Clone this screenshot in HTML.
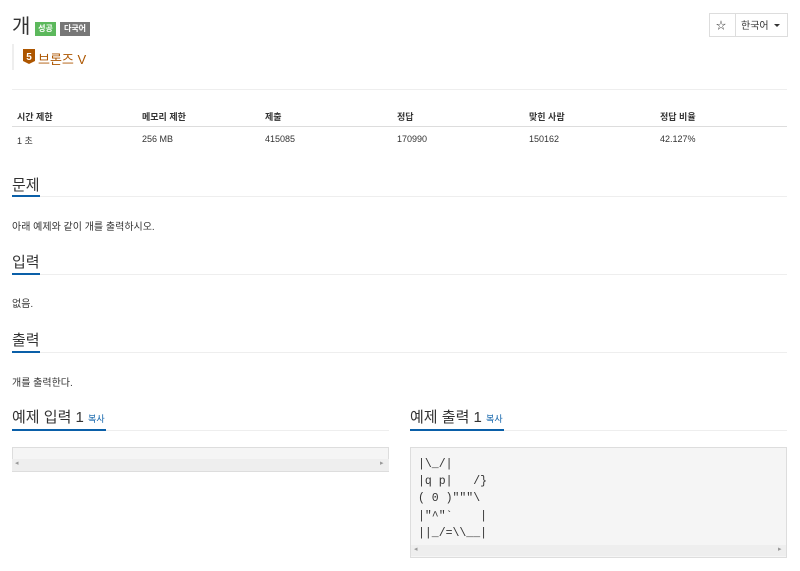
<!DOCTYPE html>
<html><head><meta charset="utf-8"><style>
body{margin:0;width:800px;height:571px;background:#fff;font-family:"Liberation Sans","Noto Sans CJK KR",sans-serif;color:#333;position:relative;overflow:hidden}
.a{position:absolute;white-space:nowrap}
.badge{position:absolute;top:22px;height:14px;font-size:8px;color:#fff;line-height:14px;text-align:center;font-weight:bold}
.th{font-size:9px;font-weight:bold;top:110px}
.td{font-size:9px;top:134px}
.h{font-size:15px;color:#333}
.ul{position:absolute;height:2px;background:#0a5fa8}
.gl{position:absolute;height:1px;background:#eee}
.p{font-size:10px}
pre.a{margin:0;font-family:"Liberation Mono","DejaVu Sans Mono",monospace;font-size:11.5px;line-height:17.2px;color:#333;white-space:pre}
</style></head><body>
<div class="a" style="left:12px;top:10px;font-size:20px;color:#333">개</div>
<div class="badge" style="left:35px;width:21px;background:#5cb85c">성공</div>
<div class="badge" style="left:60px;width:30px;background:#777">다국어</div>
<div class="a" style="left:12px;top:44px;width:2px;height:26px;background:#eee"></div>
<svg class="a" style="left:23px;top:49px" width="12" height="16" viewBox="0 0 12 16"><path d="M0 0H12V12L6 15L0 12Z" fill="#ad5600"/><text x="6" y="11" font-size="10" font-weight="bold" fill="#fff" text-anchor="middle" font-family="Liberation Sans">5</text></svg>
<div class="a" style="left:38px;top:49px;font-size:13px;color:#ad5600">브론즈 V</div>
<div class="a" style="left:709px;top:13px;width:77px;height:22px;border:1px solid #ddd"></div>
<div class="a" style="left:735px;top:13px;width:1px;height:24px;background:#ddd"></div>
<div class="a" style="left:716px;top:17px;font-size:10px">☆</div>
<div class="a" style="left:741px;top:17px;font-size:10px">한국어</div>
<div class="a" style="left:774px;top:24px;border:3px solid transparent;border-top:3px solid #333;border-bottom:0"></div>
<div class="gl" style="left:12px;top:89px;width:775px"></div>
<div class="a th" style="left:17px">시간 제한</div><div class="a th" style="left:142px">메모리 제한</div><div class="a th" style="left:265px">제출</div><div class="a th" style="left:397px">정답</div><div class="a th" style="left:529px">맞힌 사람</div><div class="a th" style="left:660px">정답 비율</div>
<div class="a" style="left:12px;top:126px;width:775px;height:1px;background:#ddd"></div>
<div class="a td" style="left:17px">1 초</div><div class="a td" style="left:142px">256 MB</div><div class="a td" style="left:265px">415085</div><div class="a td" style="left:397px">170990</div><div class="a td" style="left:529px">150162</div><div class="a td" style="left:660px">42.127%</div>
<div class="a h" style="left:12px;top:174px">문제</div><div class="gl" style="left:12px;top:196px;width:775px"></div><div class="ul" style="left:12px;top:195px;width:28px"></div>
<div class="a p" style="left:12px;top:218px">아래 예제와 같이 개를 출력하시오.</div>
<div class="a h" style="left:12px;top:251px">입력</div><div class="gl" style="left:12px;top:274px;width:775px"></div><div class="ul" style="left:12px;top:273px;width:28px"></div>
<div class="a p" style="left:12px;top:295px">없음.</div>
<div class="a h" style="left:12px;top:329px">출력</div><div class="gl" style="left:12px;top:352px;width:775px"></div><div class="ul" style="left:12px;top:351px;width:28px"></div>
<div class="a p" style="left:12px;top:374px">개를 출력한다.</div>
<div class="a h" style="left:12px;top:406px">예제 입력 1 <span style="font-size:9px;color:#0a5fa8">복사</span></div><div class="gl" style="left:12px;top:430px;width:377px"></div><div class="ul" style="left:12px;top:429px;width:94px"></div>
<div class="a h" style="left:410px;top:406px">예제 출력 1 <span style="font-size:9px;color:#0a5fa8">복사</span></div><div class="gl" style="left:410px;top:430px;width:377px"></div><div class="ul" style="left:410px;top:429px;width:94px"></div>
<div class="a" style="left:12px;top:447px;width:375px;height:23px;border:1px solid #ddd;background:#f5f5f5"></div>
<div class="a" style="left:12px;top:459px;width:377px;height:12px;background:#eee"></div>
<div class="a" style="left:15px;top:459px;font-size:7px;color:#999">◂</div><div class="a" style="left:380px;top:459px;font-size:7px;color:#999">▸</div>
<div class="a" style="left:410px;top:447px;width:375px;height:109px;border:1px solid #ddd;background:#f5f5f5"></div>
<pre class="a" style="left:418px;top:456px">|\_/|
|q p|   /}
( 0 )"""\
|"^"`    |
||_/=\\__|</pre>
<div class="a" style="left:411px;top:545px;width:375px;height:11px;background:#eee"></div>
<div class="a" style="left:414px;top:545px;font-size:7px;color:#999">◂</div><div class="a" style="left:778px;top:545px;font-size:7px;color:#999">▸</div>
</body></html>
